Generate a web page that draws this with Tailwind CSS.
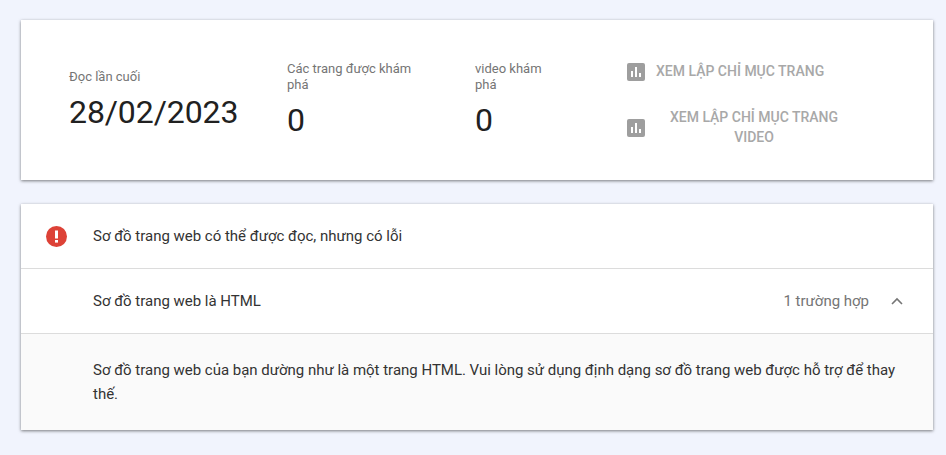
<!DOCTYPE html>
<html lang="en">
<head>
  <meta charset="UTF-8" />
  <title>Sitemap</title>
  <script src="https://cdn.jsdelivr.net/npm/@tailwindcss/browser@4"></script>
</head>
<body class="bg-[#f1f4fd] h-[455px] overflow-hidden font-['Roboto',sans-serif] text-[#212121]">
  <div class="pl-[21px] pr-[13px] pt-5">
    <!-- summary card -->
    <div class="bg-white h-40 flex items-start shadow-[0_1px_3px_rgba(0,0,0,0.5)] pl-12">
      <div class="w-[218px] pt-[49px]">
        <div class="text-[13px] leading-4 text-[#757575]">Đọc lần cuối</div>
        <div class="text-[32px] leading-10 mt-[7px] tracking-[-0.1px]">28/02/2023</div>
      </div>
      <div class="w-[188px] pt-[41px]">
        <div class="text-[13px] leading-4 text-[#757575] w-[130px]">Các trang được khám phá</div>
        <div class="text-[32px] leading-10 mt-[7px]">0</div>
      </div>
      <div class="w-[152px] pt-[41px]">
        <div class="text-[13px] leading-4 text-[#757575] w-[70px]">video khám phá</div>
        <div class="text-[32px] leading-10 mt-[7px]">0</div>
      </div>
      <div class="w-[240px] pt-[41px] text-[14px] font-medium text-[#a8a8a8]">
        <div class="flex items-center h-5">
          <svg class="w-[18px] h-[18px] shrink-0 mt-0.5" viewBox="0 0 18 18"><rect width="18" height="18" rx="2" fill="#9e9e9e"/><path d="M4 8h2v6H4zM8 4h2v10H8zM12 10h2v4h-2z" fill="#fff"/></svg>
          <span class="ml-[11px]">XEM LẬP CHỈ MỤC TRANG</span>
        </div>
        <div class="flex items-center mt-[26px]">
          <svg class="w-[18px] h-[18px] shrink-0 mt-0.5" viewBox="0 0 18 18"><rect width="18" height="18" rx="2" fill="#9e9e9e"/><path d="M4 8h2v6H4zM8 4h2v10H8zM12 10h2v4h-2z" fill="#fff"/></svg>
          <span class="w-[180px] ml-[19px] text-center leading-5">XEM LẬP CHỈ MỤC TRANG VIDEO</span>
        </div>
      </div>
    </div>
    <!-- error card -->
    <div class="bg-white mt-6 shadow-[0_1px_3px_rgba(0,0,0,0.5)] text-[15px] text-[#333] tracking-[-0.015px]">
      <div class="h-[65px] flex items-center pl-[25px] border-b border-[#dcdcdc]">
        <svg class="w-[21px] h-[21px] shrink-0" viewBox="0 0 21 21"><circle cx="10.5" cy="10.5" r="10.5" fill="#dd4237"/><rect x="9" y="4.5" width="3" height="8" fill="#fff"/><rect x="9" y="14" width="3" height="2.6" fill="#fff"/></svg>
        <span class="ml-[26px]">Sơ đồ trang web có thể được đọc, nhưng có lỗi</span>
      </div>
      <div class="h-[65px] flex items-center pl-[72px] pr-[30px] border-b border-[#dcdcdc]">
        <span class="flex-1">Sơ đồ trang web là HTML</span>
        <span class="text-[#757575] mr-px">1 trường hợp</span>
        <svg class="w-3 h-2 ml-[21px]" viewBox="0 0 12 8"><path d="M1 7l5-5 5 5" fill="none" stroke="#757575" stroke-width="1.6"/></svg>
      </div>
      <div class="bg-[#fafafa] h-24 pl-[72px] pr-9 pt-6 leading-6">Sơ đồ trang web của bạn dường như là một trang HTML. Vui lòng sử dụng định dạng sơ đồ trang web được hỗ trợ để thay thế.</div>
    </div>
  </div>
</body>
</html>
